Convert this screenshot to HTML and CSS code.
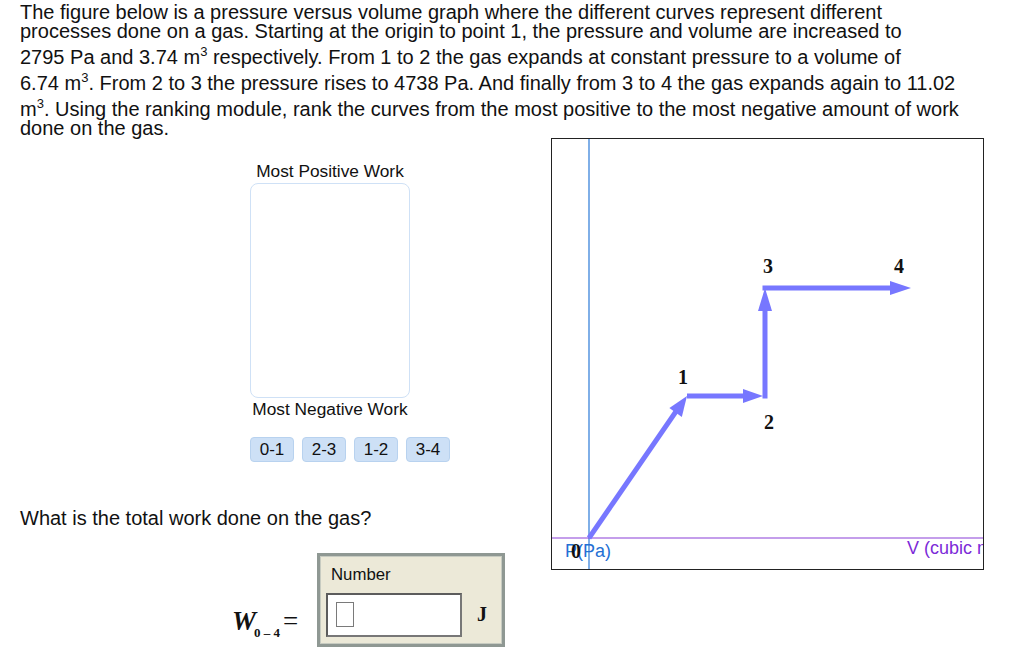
FILE: index.html
```html
<!DOCTYPE html>
<html>
<head>
<meta charset="utf-8">
<link rel="stylesheet" href="styles.css">
</head>
<body>
<div class="page">
  <p class="intro">The figure below is a pressure versus volume graph where the different curves represent different<br>processes done on a gas. Starting at the origin to point 1, the pressure and volume are increased to<br>2795 Pa and 3.74 m<sup>3</sup> respectively. From 1 to 2 the gas expands at constant pressure to a volume of<br>6.74 m<sup>3</sup>. From 2 to 3 the pressure rises to 4738 Pa. And finally from 3 to 4 the gas expands again to 11.02<br>m<sup>3</sup>. Using the ranking module, rank the curves from the most positive to the most negative amount of work<br>done on the gas.</p>
  <div class="main">
    <div class="left">
      <div class="ranking">
        <div class="rank-label top">Most Positive Work</div>
        <div class="rank-box"></div>
        <div class="rank-label bottom">Most Negative Work</div>
        <div class="chips">
          <span class="chip">0-1</span>
          <span class="chip">2-3</span>
          <span class="chip">1-2</span>
          <span class="chip">3-4</span>
        </div>
      </div>
      <p class="question">What is the total work done on the gas?</p>
      <div class="answer-row">
        <div class="wlabel"><span class="w">W</span><span class="sub">0 – 4</span><span class="eq">=</span></div>
        <div class="numbox">
          <div class="numtitle">Number</div>
          <div class="numrow">
            <div class="input"><span class="caret"></span></div>
            <span class="unit">J</span>
          </div>
        </div>
      </div>
    </div>
    <div class="graph">
      <svg width="433" height="432" viewBox="0 0 433 432">
        <line x1="38" y1="0" x2="38" y2="432" stroke="#2a7ad8" stroke-width="1.2"/>
        <line x1="0" y1="401" x2="433" y2="401" stroke="#8a3ed8" stroke-width="1.2"/>
        <g stroke="#7777ff" stroke-width="5" fill="none">
          <line x1="38" y1="401" x2="126" y2="273"/>
          <line x1="136" y1="259" x2="196" y2="259"/>
          <line x1="214" y1="261.5" x2="214" y2="172"/>
          <line x1="211.5" y1="151" x2="342" y2="151"/>
        </g>
        <g fill="#7777ff">
          <polygon points="136,259 130.8,280 118.4,271"/>
          <polygon points="192,252 212,259 192,266"/>
          <polygon points="207,174 214,151 221,174"/>
          <polygon points="339,144 360,151 339,158"/>
        </g>
        <text class="axis-p" x="14" y="420">P(Pa)</text>
        <g class="ptlabel">
          <text x="132" y="247" text-anchor="middle">1</text>
          <text x="218" y="292" text-anchor="middle">2</text>
          <text x="217" y="136" text-anchor="middle">3</text>
          <text x="348" y="136" text-anchor="middle">4</text>
          <text x="25" y="421" text-anchor="middle">0</text>
        </g>
        <text class="axis-v" x="356" y="417">V (cubic m)</text>
      </svg>
    </div>
  </div>
</div>
</body>
</html>
```

FILE: styles.css
```css
html, body {
  margin: 0;
  padding: 0;
  background: #fff;
}
body {
  font-family: "Liberation Sans", Arial, sans-serif;
  color: #111;
}
.page {
  padding: 2.5px 0 0 20px;
  width: 1004px;
}
.intro {
  margin: 0;
  font-size: 20px;
  line-height: 19px;
  width: 990px;
  white-space: nowrap;
}
.intro sup {
  font-size: 13px;
  line-height: 22px;
  vertical-align: 8px;
}
.main {
  display: flex;
}
.left {
  width: 531px;
  flex: none;
}
.ranking {
  margin-left: 230px;
  width: 202px;
  padding-top: 24px;
}
.rank-label {
  font-size: 17.3px;
  line-height: 19px;
  width: 160px;
  text-align: center;
}
.rank-box {
  width: 158px;
  height: 213px;
  border: 1px solid #cfe1f6;
  border-radius: 8px;
  margin-top: 2px;
}
.rank-label.bottom {
  margin-top: 2px;
}
.chips {
  display: flex;
  gap: 8px;
  margin-top: 18px;
}
.chip {
  width: 42px;
  height: 23px;
  background: #cde0f6;
  border: 1px solid #b8d2ef;
  border-radius: 4px;
  font-size: 17px;
  line-height: 23px;
  text-align: center;
}
.question {
  margin: 45px 0 0 0;
  font-size: 20px;
  line-height: 23px;
}
.answer-row {
  display: flex;
  align-items: flex-start;
  margin-top: 23px;
  margin-left: 212px;
}
.wlabel {
  width: 85px;
  flex: none;
  font-family: "Liberation Serif", "Times New Roman", serif;
  font-weight: bold;
  display: flex;
  align-items: baseline;
  margin-top: 56px;
  line-height: 24px;
}
.w {
  font-style: italic;
  font-size: 27px;
}
.sub {
  font-size: 13px;
  position: relative;
  top: 7px;
  margin-left: -2px;
}
.eq {
  font-size: 27px;
  font-weight: normal;
  margin-left: 3px;
}
.numbox {
  width: 182px;
  height: 88px;
  background: #ece9d8;
  border: 3px solid #8f9893;
  box-shadow: inset 0 0 0 1px #c7cbc1;
}
.numtitle {
  font-size: 16.8px;
  line-height: 19px;
  margin: 9px 0 0 11px;
}
.numrow {
  display: flex;
  align-items: center;
  margin: 9px 0 0 6px;
}
.input {
  width: 132px;
  height: 40px;
  background: #fff;
  border: 2px solid #5c5c5c;
  border-right-color: #777;
  border-bottom-color: #777;
  display: flex;
  align-items: center;
}
.caret {
  display: block;
  width: 16px;
  height: 23px;
  border: 1px solid #7a7a7a;
  margin-left: 8px;
}
.unit {
  font-family: "Liberation Serif", "Times New Roman", serif;
  font-weight: bold;
  font-size: 20px;
  margin-left: 15px;
}
.graph {
  width: 433px;
  height: 432px;
  border: 1.5px solid #222;
  box-sizing: border-box;
  overflow: hidden;
}
.graph svg {
  display: block;
  margin: -1.5px;
}
.ptlabel {
  font-family: "Liberation Serif", "Times New Roman", serif;
  font-weight: bold;
  font-size: 20px;
  fill: #111;
}
.axis-p {
  font-family: "Liberation Sans", Arial, sans-serif;
  font-size: 18px;
  fill: #2470d4;
}
.axis-v {
  font-family: "Liberation Sans", Arial, sans-serif;
  font-size: 18px;
  fill: #7c2ad8;
}
```
